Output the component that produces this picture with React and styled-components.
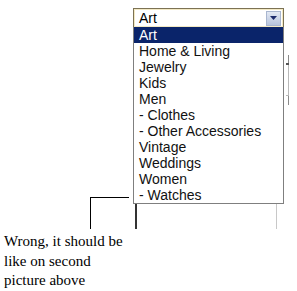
import React from "react";
import styled, { createGlobalStyle } from "styled-components";

const Global = createGlobalStyle`
  html, body { margin: 0; padding: 0; background: #ffffff; }
  #root { width: 297px; height: 291px; overflow: hidden; }
`;

const Canvas = styled.div`
  width: 297px;
  height: 291px;
  background: #fff;
  display: grid;
  grid-template-columns: 133px 164px;
  overflow: hidden;
`;

const LeftColumn = styled.div`
  display: flex;
  flex-direction: column;
  padding-top: 197px;
`;

const Connector = styled.div`
  margin-left: 90px;
  width: 38px;
  height: 31px;
  border-top: 1px solid #000;
  border-left: 1px solid #000;
`;

const Note = styled.p`
  margin: 3px 0 0 4px;
  width: 126px;
  font-family: "Liberation Serif", "Times New Roman", serif;
  font-size: 15px;
  line-height: 19.5px;
  color: #000;
`;

const RightColumn = styled.div`
  display: flex;
  flex-direction: column;
  padding-top: 8px;
`;

const Widget = styled.div`
  position: relative;
  width: 151px;
  z-index: 1;
`;

const SelectBox = styled.div`
  box-sizing: border-box;
  height: 20px;
  width: 151px;
  border: 1px solid #7c7254;
  box-shadow: inset 0 0 0 1px #f3e9c4;
  background: #fff;
  display: flex;
  align-items: center;
  justify-content: space-between;
  padding: 0 2px 0 5px;
  font-family: Arial, "Liberation Sans", sans-serif;
  font-size: 14px;
  color: #000;
`;

const ArrowButton = styled.div`
  box-sizing: border-box;
  width: 15px;
  height: 15px;
  background: linear-gradient(#e2e8f3, #b7c4dd);
  border: 1px solid #a9b6cf;
  display: flex;
  align-items: center;
  justify-content: center;
`;

const List = styled.ul`
  position: absolute;
  left: 0;
  top: 19px;
  box-sizing: border-box;
  width: 151px;
  margin: 0;
  padding: 0;
  list-style: none;
  background: #fff;
  border: 1px solid #7f7f7f;
  border-top: none;
`;

const Option = styled.li`
  height: 16px;
  line-height: 16px;
  padding-left: 5px;
  font-family: Arial, "Liberation Sans", sans-serif;
  font-size: 14px;
  white-space: nowrap;
  color: ${(p) => (p.$selected ? "#fff" : "#111")};
  background: ${(p) => (p.$selected ? "#0a246a" : "transparent")};
`;

const BehindRow = styled.div`
  display: flex;
  align-items: flex-start;
  gap: 11px;
`;

const Behind = styled.div`
  margin-left: 2px;
  width: 139px;
  height: 201px;
  border-left: 2px solid #333;
  border-right: 1px solid #c8c8c8;
`;

const SideRail = styled.div`
  position: relative;
  margin-top: 27px;
  width: 1px;
  height: 50px;
  background: #8a8a8a;
  &::before {
    content: "";
    position: absolute;
    left: -2px;
    top: 8px;
    width: 3px;
    height: 33px;
    box-sizing: border-box;
    border: 1px solid #b8b8b8;
    border-left: none;
  }
  &::after {
    content: "";
    position: absolute;
    left: -2px;
    top: 8px;
    width: 3px;
    height: 2px;
    background: #555;
  }
`;

const items = [
  "Art",
  "Home & Living",
  "Jewelry",
  "Kids",
  "Men",
  "- Clothes",
  "- Other Accessories",
  "Vintage",
  "Weddings",
  "Women",
  "- Watches",
];

export default function App() {
  return (
    <>
      <Global />
      <Canvas>
        <LeftColumn>
          <Connector />
          <Note>Wrong, it should be like on second picture above</Note>
        </LeftColumn>
        <RightColumn>
          <Widget>
            <SelectBox>
              <span>Art</span>
              <ArrowButton>
                <svg width="7" height="4" viewBox="0 0 7 4">
                  <polygon points="0,0 7,0 3.5,4" fill="#1c2a6b" />
                </svg>
              </ArrowButton>
            </SelectBox>
            <List>
              {items.map((it, i) => (
                <Option key={it} $selected={i === 0}>
                  {it}
                </Option>
              ))}
            </List>
          </Widget>
          <BehindRow>
            <Behind />
            <SideRail />
          </BehindRow>
        </RightColumn>
      </Canvas>
    </>
  );
}
